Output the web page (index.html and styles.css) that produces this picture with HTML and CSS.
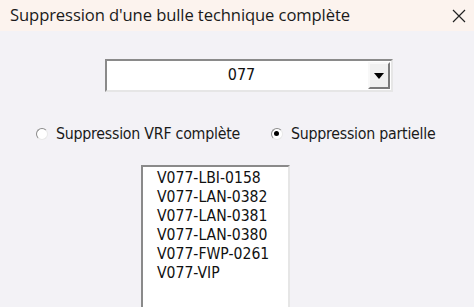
FILE: index.html
```html
<!DOCTYPE html>
<html>
<head>
<meta charset="utf-8">
<link rel="stylesheet" href="styles.css">
</head>
<body>
<div class="window">
  <div class="titlebar">
    <span class="title">Suppression d'une bulle technique complète</span>
    <svg class="close" width="14" height="14" viewBox="0 0 14 14"><path d="M1 1L13 13M13 1L1 13" stroke="#222" stroke-width="1.2" fill="none"/></svg>
  </div>
  <div class="content">
    <div class="combo">
      <div class="combo-value">077</div>
      <div class="combo-btn"><svg width="10" height="6" viewBox="0 0 10 6"><path d="M0 0H10L5 6Z" fill="#000"/></svg></div>
    </div>
    <div class="radios">
      <label class="radio"><span class="dot"></span>Suppression VRF complète</label>
      <label class="radio checked"><span class="dot"></span>Suppression partielle</label>
    </div>
    <div class="listbox">
      <div class="item">V077-LBI-0158</div>
      <div class="item">V077-LAN-0382</div>
      <div class="item">V077-LAN-0381</div>
      <div class="item">V077-LAN-0380</div>
      <div class="item">V077-FWP-0261</div>
      <div class="item">V077-VIP</div>
    </div>
  </div>
</div>
</body>
</html>
```
FILE: styles.css
```css
* { box-sizing: border-box; }
html, body { margin: 0; padding: 0; height: 100%; overflow: hidden; }
body { background: #f3f2f6; font-family: "DejaVu Sans", sans-serif; }
.window { display: flex; flex-direction: column; height: 307px; }
.titlebar {
  height: 31px; background: #fcf3ee; display: flex; align-items: center;
  justify-content: space-between; padding: 0 8px 2px 10px; flex-shrink: 0;
}
.title { font-family: "Open Sans", sans-serif; font-size: 16.6px; color: #1a1a1a; letter-spacing: -0.1px; }
.close { margin-top: 2px; }
.content { flex: 1; display: flex; flex-direction: column; align-items: flex-start; }
.combo {
  margin: 28px 0 0 105px; width: 288px; height: 33px; display: flex;
  background: #fff; border: 2px solid; border-color: #8a8a8a #e6e6e6 #e6e6e6 #8a8a8a;
}
.combo-value { flex: 1; text-align: center; font-family: "DejaVu Sans Condensed", sans-serif; font-size: 16px; color: #111; line-height: 28px; padding-left: 8px; }
.combo-btn {
  width: 22px; margin: 1px 1px 1px 0; background: #f0f0f0;
  border: 2px solid; border-color: #f8f8f8 #7a7a7a #7a7a7a #f8f8f8;
  display: flex; align-items: center; justify-content: center;
}
.radios { margin: 32px 0 0 36px; display: flex; gap: 31px; }
.radio { display: flex; align-items: center; font-size: 15.8px; color: #1a1a1a; letter-spacing: -0.25px; font-family: "DejaVu Sans Condensed", "DejaVu Sans", sans-serif; }
.dot {
  width: 12px; height: 12px; border-radius: 50%; background: #fff;
  border: 1.5px solid; border-color: #8a8a8a #e8e8e8 #e8e8e8 #8a8a8a;
  margin-right: 8px; position: relative;
}
.radio.checked .dot::after {
  content: ""; position: absolute; left: 2px; top: 2px; width: 5px; height: 5px; border-radius: 50%; background: #000;
}
.listbox {
  margin: 22px 0 0 141px; width: 149px; flex: 1; background: #fff;
  border: 2px solid; border-bottom: none; border-color: #8a8a8a #e6e6e6 #e6e6e6 #8a8a8a;
  padding: 2px 0 0 14px;
}
.item { font-family: "DejaVu Sans Condensed", "DejaVu Sans", sans-serif; font-size: 15.6px; line-height: 19px; color: #111; }
```
